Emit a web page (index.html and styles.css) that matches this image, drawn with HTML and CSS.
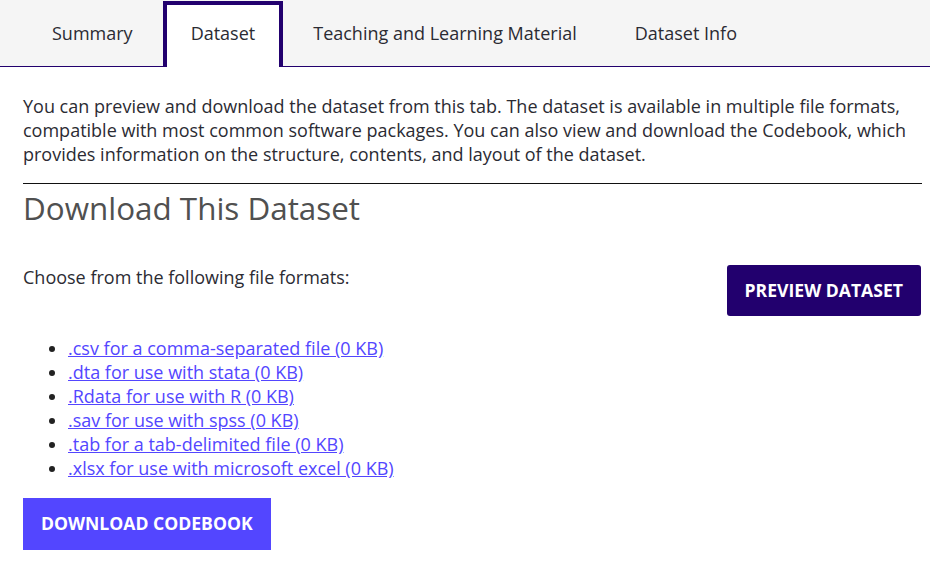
FILE: index.html
```html
<!DOCTYPE html>
<html lang="en">
<head>
<meta charset="utf-8">
<title>Dataset</title>
<link rel="stylesheet" href="styles.css">
</head>
<body>
<nav class="tabbar">
  <ul class="tabs">
    <li class="tab">Summary</li>
    <li class="tab tab-active">Dataset</li>
    <li class="tab">Teaching and Learning Material</li>
    <li class="tab">Dataset Info</li>
  </ul>
</nav>
<main class="content">
  <p class="intro">You can preview and download the dataset from this tab. The dataset is available in multiple file formats, compatible with most common software packages. You can also view and download the Codebook, which provides information on the structure, contents, and layout of the dataset.</p>
  <hr class="rule">
  <h2 class="heading">Download This Dataset</h2>
  <div class="choose-row">
    <p class="choose">Choose from the following file formats:</p>
    <a class="btn btn-dark" href="#">Preview Dataset</a>
  </div>
  <ul class="formats">
    <li><a href="#">.csv for a comma-separated file (0 KB)</a></li>
    <li><a href="#">.dta for use with stata (0 KB)</a></li>
    <li><a href="#">.Rdata for use with R (0 KB)</a></li>
    <li><a href="#">.sav for use with spss (0 KB)</a></li>
    <li><a href="#">.tab for a tab-delimited file (0 KB)</a></li>
    <li><a href="#">.xlsx for use with microsoft excel (0 KB)</a></li>
  </ul>
  <a class="btn btn-brand" href="#">Download Codebook</a>
</main>
</body>
</html>
```
FILE: styles.css
```css
* { box-sizing: border-box; }
html, body { margin: 0; padding: 0; background: #fff; }
body {
  font-family: "Open Sans", "Liberation Sans", sans-serif;
  font-size: 18px;
  line-height: 24px;
  color: #2b2b33;
}
.tabbar {
  background: #f5f5f5;
  border-bottom: 1px solid #22006e;
  height: 67px;
}
.tabs {
  list-style: none;
  margin: 0;
  padding: 1px 0 0 24px;
  display: flex;
  gap: 2px;
}
.tab {
  padding: 16px 24px 22px;
  border: 4px solid transparent;
  border-bottom: 0;
  height: 66px;
  white-space: nowrap;
}
.tab-active {
  background: #fff;
  border-color: #22006e;
}
.content {
  padding: 27px 8px 40px 23px;
}
.intro { margin: 0; }
.rule {
  margin: 17px 0 0;
  border: 0;
  border-top: 1px solid #111;
  height: 0;
}
.heading {
  margin: 5px 0 0;
  font-size: 31.4px;
  line-height: 38px;
  font-weight: 400;
  color: #505050;
}
.choose-row {
  margin-top: 38px;
  display: flex;
  justify-content: space-between;
  align-items: flex-start;
}
.choose { margin: 0; }
.btn {
  display: inline-block;
  text-decoration: none;
  color: #fff;
  font-weight: 700;
  text-transform: uppercase;
  font-size: 17.6px;
  padding: 14px 18px;
  line-height: 23px;
  white-space: nowrap;
}
.btn-dark {
  background: #22006e;
  border-radius: 3px;
  height: 51px;
  margin-right: 1px;
}
.btn-brand {
  background: #5346ff;
  height: 52px;
  margin-top: 18px;
}
.formats {
  margin: 20px 0 0;
  padding-left: 45px;
}
.formats li::marker { color: #222; }
.formats a {
  color: #5346ff;
  text-decoration: underline;
}
```
